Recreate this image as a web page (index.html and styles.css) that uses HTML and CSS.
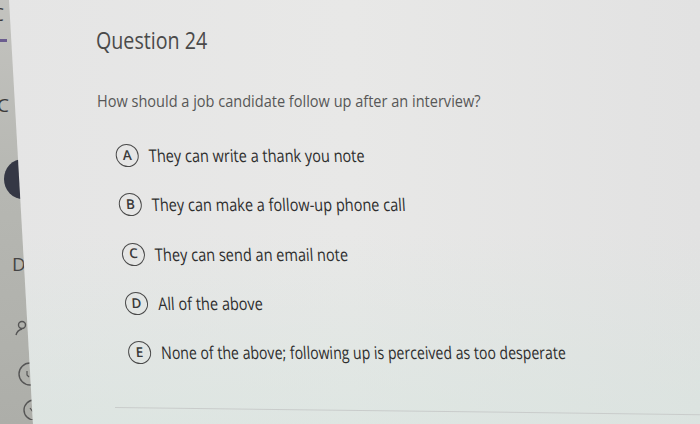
FILE: index.html
```html
<!DOCTYPE html>
<html>
<head>
<meta charset="utf-8">
<link rel="stylesheet" href="styles.css">
</head>
<body>
<div class="screen">
  <div class="rail">
    <span class="rail-letter rail-c1">C</span>
    <span class="rail-bar"></span>
    <span class="rail-letter rail-c2">C</span>
    <span class="rail-dot"></span>
    <span class="rail-letter rail-d">D</span>
    <svg class="rail-icon rail-person" width="12" height="16" viewBox="0 0 12 16"><circle cx="7" cy="5" r="3.5" fill="none" stroke="#555" stroke-width="1.4"/><path d="M1 15 C2 11 5 9.5 7 9" fill="none" stroke="#555" stroke-width="1.4"/></svg>
    <svg class="rail-icon rail-clock" width="16" height="26" viewBox="0 0 16 26"><circle cx="12" cy="13" r="11" fill="none" stroke="#555" stroke-width="1.4"/><path d="M9 10 L9 14 L11 16" fill="none" stroke="#555" stroke-width="1.2"/></svg>
    <svg class="rail-icon rail-clock2" width="16" height="22" viewBox="0 0 16 22"><circle cx="12" cy="12" r="10" fill="none" stroke="#555" stroke-width="1.4"/><path d="M8 10 L11 14" fill="none" stroke="#555" stroke-width="1.2"/></svg>
  </div>
  <main class="panel">
    <h1 class="title"><span class="squeeze">Question 24</span></h1>
    <p class="prompt"><span class="squeeze">How should a job candidate follow up after an interview?</span></p>
    <ul class="options">
      <li class="option"><span class="badge">A</span><span class="label squeeze">They can write a thank you note</span></li>
      <li class="option"><span class="badge">B</span><span class="label squeeze">They can make a follow-up phone call</span></li>
      <li class="option"><span class="badge">C</span><span class="label squeeze">They can send an email note</span></li>
      <li class="option"><span class="badge">D</span><span class="label squeeze">All of the above</span></li>
      <li class="option"><span class="badge">E</span><span class="label squeeze">None of the above; following up is perceived as too desperate</span></li>
    </ul>
    <div class="rule"></div>
  </main>
</div>
</body>
</html>
```

FILE: styles.css
```css
* { box-sizing: border-box; }
html, body {
  margin: 0;
  padding: 0;
  width: 700px;
  height: 424px;
  overflow: hidden;
}
body {
  font-family: "Open Sans", "DejaVu Sans", sans-serif;
  background: linear-gradient(180deg, #c3c3bf 0%, #b6b7b2 45%, #adaea9 100%);
}
.screen {
  display: flex;
  width: 700px;
  height: 424px;
}
.rail {
  width: 40px;
  flex: none;
  display: flex;
  flex-direction: column;
  align-items: flex-start;
  color: #3a3a3a;
}
.rail-letter {
  font-size: 19px;
  line-height: 20px;
  display: block;
}
.rail-c1 { margin: 4px 0 0 -8px; }
.rail-bar {
  display: block;
  width: 7px;
  height: 3px;
  background: #6b5d8f;
  margin-top: 15px;
}
.rail-c2 { margin: 53px 0 0 -3px; }
.rail-dot {
  display: block;
  width: 38px;
  height: 40px;
  border-radius: 50%;
  background: #353845;
  margin: 44px 0 0 4px;
}
.rail-d { margin: 55px 0 0 12px; color: #444; }
.rail-icon { display: block; flex: none; }
.rail-person { margin: 46px 0 0 15px; }
.rail-clock { margin: 25px 0 0 18px; }
.rail-clock2 { margin: 11px 0 0 22px; }

.panel {
  flex: none;
  width: 700px;
  height: 424px;
  margin-left: -40px;
  clip-path: polygon(9px 0, 100% 0, 100% 100%, 33px 100%);
  background:
    linear-gradient(180deg, rgba(230,230,230,0) 55%, rgba(214,228,222,0.55) 100%),
    linear-gradient(90deg, #e5e5e5 0%, #e8e8e7 50%, #e2e2e2 100%);
  padding: 24px 0 0 96px;
  color: #333;
}
.squeeze {
  display: inline-block;
  transform: scaleX(0.855);
  transform-origin: 0 50%;
  white-space: nowrap;
}
.title {
  margin: 0;
  font-size: 23px;
  font-weight: 400;
  line-height: 32px;
  color: #4a4a4a;
}
.prompt {
  margin: 33px 0 0 1px;
  font-size: 17px;
  line-height: 24px;
  color: #575757;
}
.options {
  list-style: none;
  margin: 31px 0 0 19px;
  padding: 0;
  transform: skewX(3.6deg);
  transform-origin: 0 0;
  display: flex;
  flex-direction: column;
  gap: 26.3px;
}
.option {
  display: flex;
  align-items: center;
  gap: 10px;
  height: 23px;
}
.badge {
  flex: none;
  width: 23px;
  height: 23px;
  border: 1.7px solid #4a4a4a;
  border-radius: 50%;
  display: flex;
  align-items: center;
  justify-content: center;
  font-size: 13.5px;
  font-weight: 600;
  color: #3a3a3a;
  line-height: 1;
}
.label {
  font-size: 17.5px;
  line-height: 23px;
  font-weight: 500;
  color: #2e2e2e;
}
.options .squeeze {
  transform: scaleX(0.83);
}
.options .option:last-child .squeeze {
  transform: scaleX(0.805);
}
.rule {
  height: 1px;
  margin: 43px 0 0 19px;
  background: #c9cccb;
  transform: rotate(0.7deg);
  transform-origin: 0 0;
}
```
